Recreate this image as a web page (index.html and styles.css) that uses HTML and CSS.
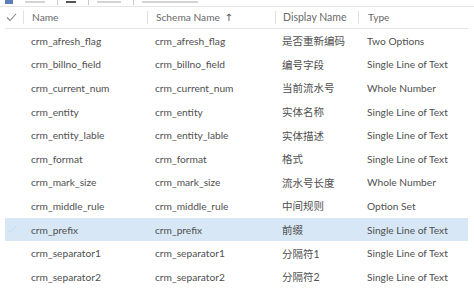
FILE: index.html
```html
<!DOCTYPE html>
<html lang="zh">
<head>
    <meta charset="UTF-8">
    <title>Fields</title>
    <link rel="stylesheet" href="styles.css">
</head>
<body>
    <div class="toolbar">
        <span class="tb-icon"></span>
        <span class="tb-bit w20"></span>
        <span class="tb-sep"></span>
        <span class="tb-bit w10 dark"></span>
        <span class="tb-sep"></span>
        <span class="tb-bit w24"></span>
        <span class="tb-sep"></span>
        <span class="tb-bit w56"></span>
    </div>

    <div class="grid">
        <div class="row head">
            <div class="cell check">
                <svg width="11" height="9" viewBox="0 0 11 9"><path d="M1 4.5 L4 7.5 L10 1" fill="none" stroke="#888" stroke-width="1.1"/></svg>
            </div>
            <div class="cell c-name">Name</div>
            <div class="cell c-schema">Schema Name <span class="arrow">&#8593;</span></div>
            <div class="cell c-display">Display Name</div>
            <div class="cell c-type">Type</div>
        </div>

        <div class="row"><div class="cell check"></div><div class="cell c-name">crm_afresh_flag</div><div class="cell c-schema">crm_afresh_flag</div><div class="cell c-display">是否重新编码</div><div class="cell c-type">Two Options</div></div>
        <div class="row"><div class="cell check"></div><div class="cell c-name">crm_billno_field</div><div class="cell c-schema">crm_billno_field</div><div class="cell c-display">编号字段</div><div class="cell c-type">Single Line of Text</div></div>
        <div class="row"><div class="cell check"></div><div class="cell c-name">crm_current_num</div><div class="cell c-schema">crm_current_num</div><div class="cell c-display">当前流水号</div><div class="cell c-type">Whole Number</div></div>
        <div class="row"><div class="cell check"></div><div class="cell c-name">crm_entity</div><div class="cell c-schema">crm_entity</div><div class="cell c-display">实体名称</div><div class="cell c-type">Single Line of Text</div></div>
        <div class="row"><div class="cell check"></div><div class="cell c-name">crm_entity_lable</div><div class="cell c-schema">crm_entity_lable</div><div class="cell c-display">实体描述</div><div class="cell c-type">Single Line of Text</div></div>
        <div class="row"><div class="cell check"></div><div class="cell c-name">crm_format</div><div class="cell c-schema">crm_format</div><div class="cell c-display">格式</div><div class="cell c-type">Single Line of Text</div></div>
        <div class="row"><div class="cell check"></div><div class="cell c-name">crm_mark_size</div><div class="cell c-schema">crm_mark_size</div><div class="cell c-display">流水号长度</div><div class="cell c-type">Whole Number</div></div>
        <div class="row"><div class="cell check"></div><div class="cell c-name">crm_middle_rule</div><div class="cell c-schema">crm_middle_rule</div><div class="cell c-display">中间规则</div><div class="cell c-type">Option Set</div></div>
        <div class="row selected">
            <div class="cell check">
                <svg width="11" height="9" viewBox="0 0 11 9"><path d="M1 4.5 L4 7.5 L10 1" fill="none" stroke="#c9dceb" stroke-width="1"/></svg>
            </div>
            <div class="cell c-name">crm_prefix</div><div class="cell c-schema">crm_prefix</div><div class="cell c-display">前缀</div><div class="cell c-type">Single Line of Text</div>
        </div>
        <div class="row"><div class="cell check"></div><div class="cell c-name">crm_separator1</div><div class="cell c-schema">crm_separator1</div><div class="cell c-display">分隔符1</div><div class="cell c-type">Single Line of Text</div></div>
        <div class="row"><div class="cell check"></div><div class="cell c-name">crm_separator2</div><div class="cell c-schema">crm_separator2</div><div class="cell c-display">分隔符2</div><div class="cell c-type">Single Line of Text</div></div>
    </div>
</body>
</html>
```

FILE: styles.css
```css
body {
    margin: 0;
    padding: 0;
    background-color: #fff;
    font-family: "Lato", "Noto Sans CJK SC", sans-serif;
    font-size: 10.2px;
    color: #505050;
    overflow: hidden;
}
.toolbar {
    display: flex;
    align-items: flex-start;
    height: 6px;
    border-bottom: 1px solid #e6e6e6;
    padding-left: 5px;
}
.tb-icon {
    width: 8px;
    height: 4px;
    background-color: #5a7fb8;
    margin-right: 12px;
}
.tb-bit {
    height: 2px;
    margin-top: 1px;
    margin-right: 12px;
    background-color: #d4d4d4;
}
.tb-bit.dark {
    background-color: #555;
}
.w10 { width: 10px; }
.w20 { width: 20px; }
.w24 { width: 24px; }
.w56 { width: 56px; }
.tb-sep {
    width: 1px;
    height: 5px;
    background-color: #c8c8c8;
    margin-right: 8px;
}
.grid {
    margin: 0 6px 0 5px;
}
.row {
    display: grid;
    grid-template-columns: 18px 124px 128px 83px 1fr;
    height: 23.6px;
    align-items: center;
}
.row.head {
    height: 21px;
    border-bottom: 1px solid #e4e4e4;
    color: #6a6a6a;
}
.row.head .cell {
    border-left: 1px solid #e2e2e2;
    height: 13px;
    line-height: 13px;
}
.row.head .cell.check {
    border-left: none;
    display: flex;
    align-items: center;
}
.row.selected {
    background-color: #d7e7f5;
}
.cell {
    white-space: nowrap;
    overflow: hidden;
}
.check {
    padding-left: 1px;
}
.c-name {
    padding-left: 8px;
}
.c-schema {
    padding-left: 8px;
}
.c-display {
    padding-left: 7px;
    font-size: 10.5px;
}
.c-type {
    padding-left: 9px;
}
.arrow {
    color: #555;
    font-family: "DejaVu Sans", sans-serif;
    font-size: 10px;
    margin-left: 2px;
}
```
